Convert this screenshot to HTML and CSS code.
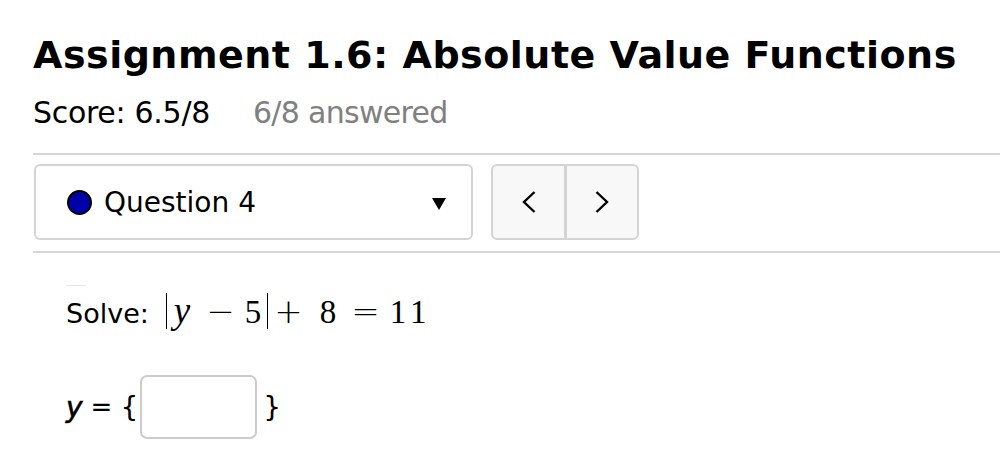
FILE: index.html
```
<!DOCTYPE html>
<html>
<head>
<meta charset="utf-8">
<link rel="stylesheet" href="styles.css">
</head>
<body>
<div class="page">
  <h1 class="title">Assignment 1.6: Absolute Value Functions</h1>
  <div class="meta">
    <span class="score">Score: 6.5/8</span>
    <span class="answered">6/8 answered</span>
  </div>
  <hr class="rule rule-top">
  <div class="nav">
    <div class="select">
      <span class="dot"></span>
      <span class="qlabel">Question 4</span>
      <span class="caret"></span>
    </div>
    <div class="pager">
      <button class="pbtn pbtn-prev">
        <svg width="16" height="24" viewBox="0 0 16 24"><path d="M13.5 2 L3 12 L13.5 22" fill="none" stroke="#000" stroke-width="2.4"/></svg>
      </button>
      <button class="pbtn pbtn-next">
        <svg width="16" height="24" viewBox="0 0 16 24"><path d="M2.5 2 L13 12 L2.5 22" fill="none" stroke="#000" stroke-width="2.4"/></svg>
      </button>
    </div>
  </div>
  <hr class="rule rule-bottom">
  <div class="question">
    <div class="tick"></div>
    <p class="solve"><span class="solve-label">Solve:</span><span class="bar bar-open"></span><span class="mi">y</span><span class="mo mo-minus">−</span><span class="mn mn-5">5</span><span class="bar bar-close"></span><span class="mo mo-plus">+</span><span class="mn mn-8">8</span><span class="mo mo-eq">=</span><span class="mn mn-11">11</span></p>
    <div class="answer">
      <span class="var">y</span><span class="eq">=</span><span class="brace brace-open">{</span><span class="box"></span><span class="brace brace-close">}</span>
    </div>
  </div>
</div>
</body>
</html>
```
FILE: styles.css
```
html, body {
  margin: 0;
  padding: 0;
  background: #fff;
}
.page {
  padding: 32px 0 0 33px;
  font-family: "DejaVu Sans", Verdana, sans-serif;
  color: #000;
}
.title {
  margin: 0;
  font-size: 38px;
  font-weight: bold;
  line-height: 46px;
  letter-spacing: 0.5px;
}
.meta {
  display: flex;
  gap: 43px;
  font-size: 30px;
  line-height: 36px;
  letter-spacing: -0.3px;
  margin-top: 17px;
}
.answered {
  color: #808080;
  letter-spacing: -0.7px;
}
.rule {
  border: 0;
  height: 2px;
  background: #d6d6d6;
  margin: 0;
}
.rule-top {
  margin-top: 22px;
}
.nav {
  display: flex;
  gap: 18px;
  margin: 9px 0 11px 1px;
}
.select {
  width: 435px;
  height: 72px;
  border: 2px solid #d4d4d4;
  border-radius: 6px;
  display: flex;
  align-items: center;
}
.dot {
  width: 21px;
  height: 21px;
  border-radius: 50%;
  background: #0000aa;
  border: 2px solid #000;
  margin-left: 31px;
  flex: none;
}
.qlabel {
  font-size: 28px;
  margin-left: 12px;
  flex: 1;
}
.caret {
  width: 0;
  height: 0;
  border-left: 7px solid transparent;
  border-right: 7px solid transparent;
  border-top: 12px solid #000;
  margin-right: 25px;
  margin-top: 4px;
}
.pager {
  display: flex;
  border: 2px solid #d4d4d4;
  border-radius: 6px;
  background: #f8f8f8;
  height: 72px;
}
.pbtn {
  box-sizing: border-box;
  height: 72px;
  border: 0;
  background: transparent;
  display: flex;
  align-items: center;
  justify-content: center;
  padding: 0;
  flex: none;
}
.pbtn-prev {
  width: 71px;
}
.pbtn-next {
  width: 73px;
  border-left: 3px solid #d4d4d4;
}
.question {
  padding-left: 33px;
}
.tick {
  width: 20px;
  height: 1px;
  background: #e4e4e4;
  margin: 32px 0 0 0;
}
.solve {
  margin: 5px 0 0 0;
  font-size: 27px;
  line-height: 40px;
  white-space: nowrap;
}
.bar {
  display: inline-block;
  width: 0;
  height: 36px;
  border-left: 1.6px solid #000;
  vertical-align: -6px;
}
.bar-open {
  margin-left: 17px;
}
.bar-close {
  margin-left: 6px;
}
.mi, .mn {
  font-family: "Liberation Serif", "DejaVu Serif", serif;
  font-size: 33px;
}
.mi {
  font-style: italic;
  font-size: 37px;
  margin-left: 7px;
}
.mo {
  font-family: "DejaVu Sans", sans-serif;
  font-size: 34px;
  font-weight: 300;
}
.mo-minus {
  margin-left: 16px;
}
.mn-5 {
  margin-left: 10px;
}
.mo-plus {
  margin-left: 6px;
}
.mn-8 {
  margin-left: 17px;
}
.mo-eq {
  margin-left: 15px;
}
.mn-11 {
  margin-left: 10px;
  letter-spacing: 5px;
}
.answer {
  display: flex;
  align-items: center;
  font-size: 28px;
  margin-top: 41px;
}
.var {
  font-style: italic;
  -webkit-text-stroke: 0.6px #000;
}
.eq {
  margin-left: 8px;
  font-size: 26px;
}
.brace-open {
  margin-left: 8px;
}
.box {
  width: 113px;
  height: 60px;
  border: 2px solid #cccccc;
  border-radius: 7px;
  margin-left: 2px;
}
.brace-close {
  margin-left: 6px;
}
```
